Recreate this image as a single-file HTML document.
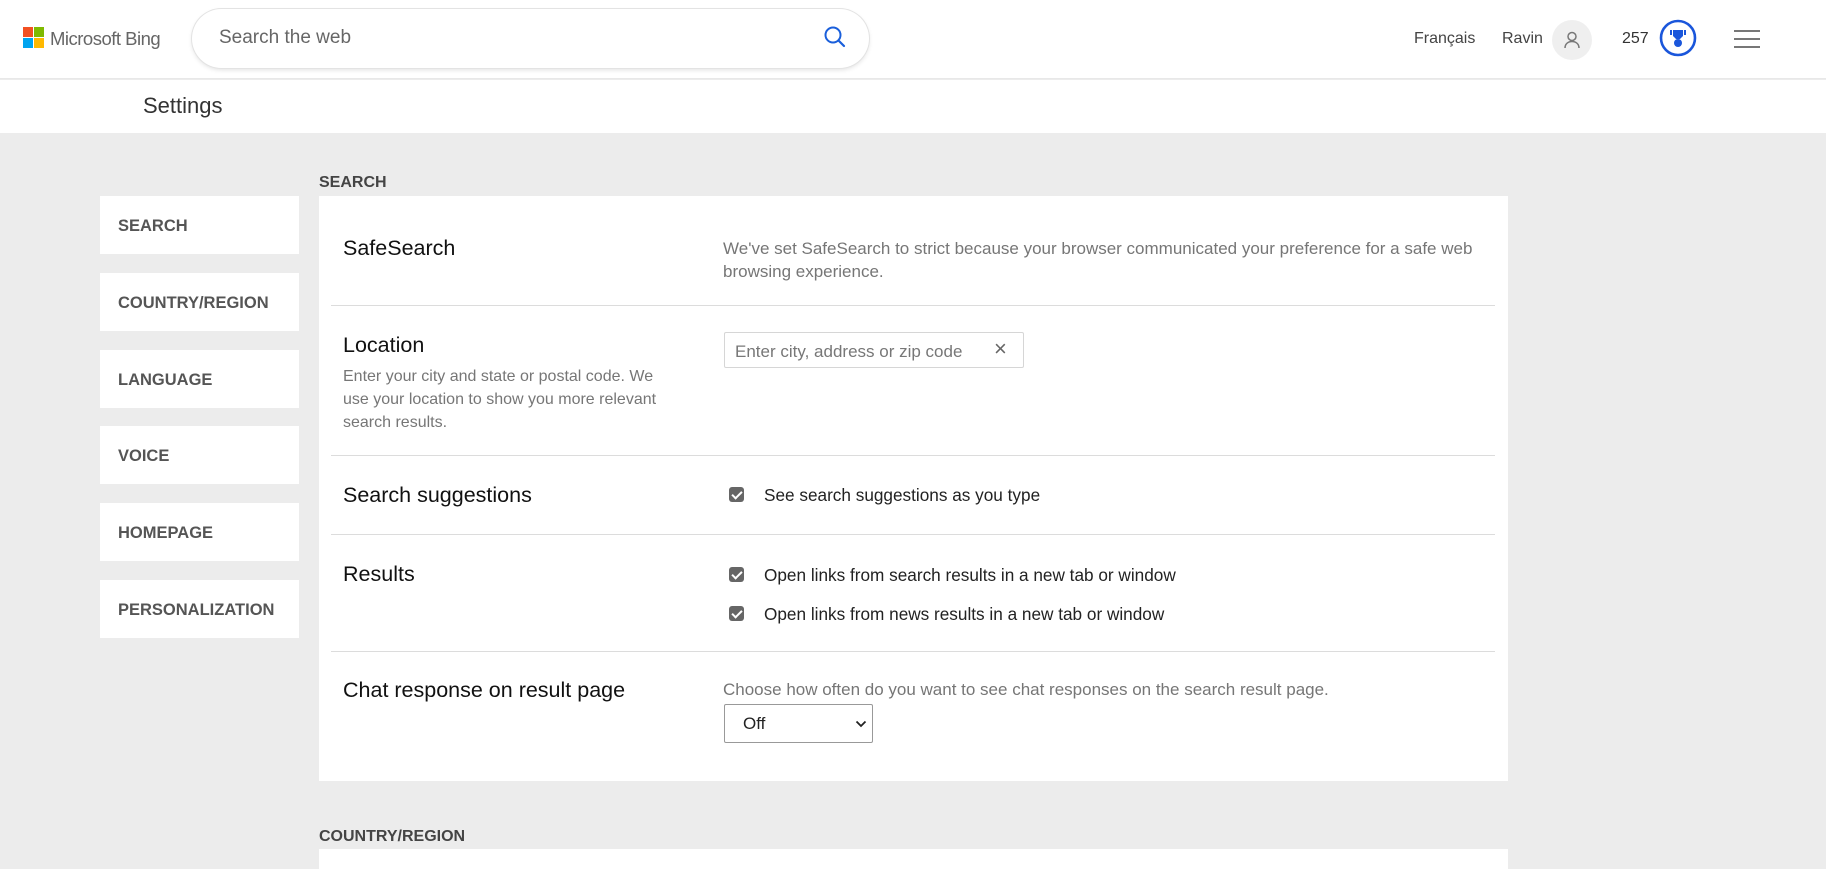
<!DOCTYPE html>
<html><head><meta charset="utf-8"><style>
*{box-sizing:border-box;margin:0;padding:0}
body{width:1826px;height:862px;overflow:hidden;background:#ececec;font-family:"Liberation Sans",sans-serif;position:relative}
.abs{position:absolute}
#hdr{left:0;top:0;width:1826px;height:79px;background:#fff;border-bottom:1px solid #e8e8e8}
#band{left:0;top:80px;width:1826px;height:53px;background:#fff}
.side{position:absolute;left:100px;width:199px;height:58px;background:#fff;font-weight:bold;font-size:16.5px;color:#555;padding-left:18px;line-height:60px}
.h{position:absolute;left:319px;font-weight:bold;font-size:16px;color:#444}
.panel{position:absolute;left:319px;width:1189px;background:#fff}
.sep{position:absolute;left:331px;width:1164px;height:1px;background:#dcdcdc}
.t{position:absolute;left:343px;font-size:21.5px;color:#111}
.d{position:absolute;left:723px;font-size:17px;color:#767676;line-height:23px}
.ld{position:absolute;left:343px;font-size:16px;color:#767676;line-height:23px;width:340px}
.cb{position:absolute;left:729px;width:15px;height:15px;background:#666;border-radius:3px}
.cb:after{content:"";position:absolute;left:5px;top:2px;width:4px;height:8px;border:solid #fff;border-width:0 2px 2px 0;transform:rotate(45deg)}
.lb{position:absolute;left:764px;font-size:17.2px;color:#222}
</style></head><body>
<div id="hdr" class="abs"></div>
<div class="abs" style="left:23px;top:27px;width:10px;height:10px;background:#f25022"></div>
<div class="abs" style="left:34px;top:27px;width:10px;height:10px;background:#7fba00"></div>
<div class="abs" style="left:23px;top:38px;width:10px;height:10px;background:#00a4ef"></div>
<div class="abs" style="left:34px;top:38px;width:10px;height:10px;background:#ffb900"></div>
<div class="abs" style="left:50px;top:28px;font-size:18.5px;color:#666;letter-spacing:-0.5px">Microsoft Bing</div>
<div class="abs" style="left:192px;top:9px;width:677px;height:59px;border-radius:30px;background:#fff;box-shadow:0 0 0 1px #e3e3e3,0 2px 5px rgba(0,0,0,.12)"></div>
<div class="abs" style="left:219px;top:27px;font-size:19px;color:#666">Search the web</div>
<svg class="abs" style="left:823px;top:25px" width="24" height="24" viewBox="0 0 24 24"><circle cx="10" cy="10" r="7.5" fill="none" stroke="#1a5fdb" stroke-width="2"/><path d="M15.5 15.5L21 21" stroke="#1a5fdb" stroke-width="2.2" stroke-linecap="round"/></svg>
<div class="abs" style="left:1414px;top:30px;font-size:16px;color:#444">Français</div>
<div class="abs" style="left:1502px;top:30px;font-size:16px;color:#444">Ravin</div>
<div class="abs" style="left:1552px;top:20px;width:40px;height:40px;border-radius:50%;background:#efefef"></div>
<svg class="abs" style="left:1562px;top:30px" width="20" height="20" viewBox="0 0 20 20"><circle cx="10" cy="6.5" r="4" fill="none" stroke="#777" stroke-width="1.5"/><path d="M3 18c0-4 3-6.5 7-6.5s7 2.5 7 6.5" fill="none" stroke="#777" stroke-width="1.5"/></svg>
<div class="abs" style="left:1622px;top:30px;font-size:16px;color:#333">257</div>
<svg class="abs" style="left:1659px;top:19px" width="38" height="38" viewBox="0 0 38 38"><circle cx="19" cy="19" r="17" fill="none" stroke="#1a56db" stroke-width="2.6"/><rect x="11" y="11" width="2" height="5" fill="#1a56db"/><rect x="25" y="11" width="2" height="5" fill="#1a56db"/><path d="M14 11h10v6l-3 3h-4l-3-3z" fill="#1a56db"/><circle cx="19" cy="24" r="4" fill="#1a56db"/></svg>
<div class="abs" style="left:1734px;top:30px;width:26px;height:2px;background:#777"></div>
<div class="abs" style="left:1734px;top:38px;width:26px;height:2px;background:#777"></div>
<div class="abs" style="left:1734px;top:46px;width:26px;height:2px;background:#777"></div>
<div id="band" class="abs"></div>
<div class="abs" style="left:143px;top:93px;font-size:22px;color:#333">Settings</div>

<div class="side" style="top:196px">SEARCH</div>
<div class="side" style="top:273px">COUNTRY/REGION</div>
<div class="side" style="top:350px">LANGUAGE</div>
<div class="side" style="top:426px">VOICE</div>
<div class="side" style="top:503px">HOMEPAGE</div>
<div class="side" style="top:580px">PERSONALIZATION</div>

<div class="h" style="top:174px">SEARCH</div>
<div class="panel" style="top:196px;height:585px"></div>
<div class="t" style="top:236px">SafeSearch</div>
<div class="d" style="top:237px;width:780px">We've set SafeSearch to strict because your browser communicated your preference for a safe web browsing experience.</div>
<div class="sep" style="top:305px"></div>
<div class="t" style="top:333px">Location</div>
<div class="ld" style="top:365px">Enter your city and state or postal code. We use your location to show you more relevant search results.</div>
<div class="abs" style="left:724px;top:332px;width:300px;height:36px;border:1px solid #d6d6d6;border-radius:2px"></div>
<div class="abs" style="left:735px;top:342px;font-size:17px;color:#777">Enter city, address or zip code</div>
<div class="abs" style="left:994px;top:336px;font-size:22px;color:#666">×</div>
<div class="sep" style="top:455px"></div>
<div class="t" style="top:483px">Search suggestions</div>
<div class="cb" style="top:487px"></div>
<div class="lb" style="top:485px">See search suggestions as you type</div>
<div class="sep" style="top:534px"></div>
<div class="t" style="top:562px">Results</div>
<div class="cb" style="top:567px"></div>
<div class="lb" style="top:565px">Open links from search results in a new tab or window</div>
<div class="cb" style="top:606px"></div>
<div class="lb" style="top:604px">Open links from news results in a new tab or window</div>
<div class="sep" style="top:651px"></div>
<div class="t" style="top:678px">Chat response on result page</div>
<div class="d" style="top:678px">Choose how often do you want to see chat responses on the search result page.</div>
<div class="abs" style="left:724px;top:704px;width:149px;height:39px;border:1px solid #999;border-radius:2px;background:#fff"></div>
<div class="abs" style="left:743px;top:714px;font-size:17px;color:#222">Off</div>
<svg class="abs" style="left:855px;top:719px" width="12" height="10" viewBox="0 0 12 10"><path d="M1.5 2.5L6 7l4.5-4.5" fill="none" stroke="#222" stroke-width="1.8"/></svg>

<div class="h" style="top:828px">COUNTRY/REGION</div>
<div class="panel" style="top:849px;height:20px"></div>
</body></html>
